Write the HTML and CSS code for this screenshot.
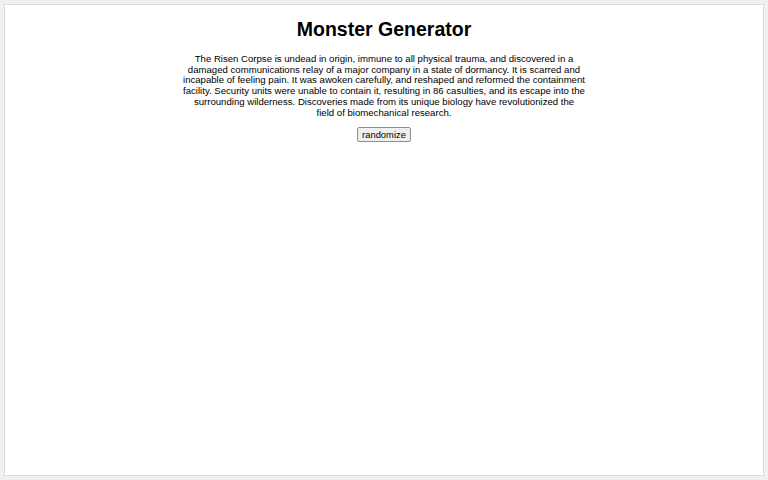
FILE: index.html
```html
<!DOCTYPE html>
<html lang="en">
<head>
  <meta charset="UTF-8" />
  <meta name="viewport" content="width=device-width, initial-scale=1.0"/>
  <title>Monster Generator</title>
  <link rel="stylesheet" href="styles.css">
</head>
<body>
  <div class="page">
    <h1>Monster Generator</h1>
    <p class="description">The Risen Corpse is undead in origin, immune to all physical trauma, and discovered in a damaged communications relay of a major company in a state of dormancy. It is scarred and incapable of feeling pain. It was awoken carefully, and reshaped and reformed the containment facility. Security units were unable to contain it, resulting in 86 casulties, and its escape into the surrounding wilderness. Discoveries made from its unique biology have revolutionized the field&nbsp;of biomechanical research.</p>
    <button class="randomize">randomize</button>
  </div>
</body>
</html>
```

FILE: styles.css
```css
* {
  box-sizing: border-box;
}

body {
  margin: 0;
  padding: 4px;
  height: 100vh;
  background: #f0f0f0;
  font-family: "Liberation Sans", Arial, sans-serif;
  color: #000;
}

.page {
  height: 100%;
  display: flex;
  flex-direction: column;
  align-items: center;
  padding-top: 13px;
  background: #fff;
  border: 1px solid #dcdcdc;
}

.page h1 {
  margin: 0 0 13px;
  font-size: 19.5px;
  font-weight: 700;
}

.description {
  width: 402px;
  margin: 0 0 9px;
  font-size: 9.6px;
  line-height: 10.7px;
  text-align: center;
}

.randomize {
  padding: 1px 4px;
  font-family: inherit;
  font-size: 9.4px;
  color: #000;
  background: #efefef;
  border: 1px solid #8f8f8f;
  border-radius: 2px;
}
```
